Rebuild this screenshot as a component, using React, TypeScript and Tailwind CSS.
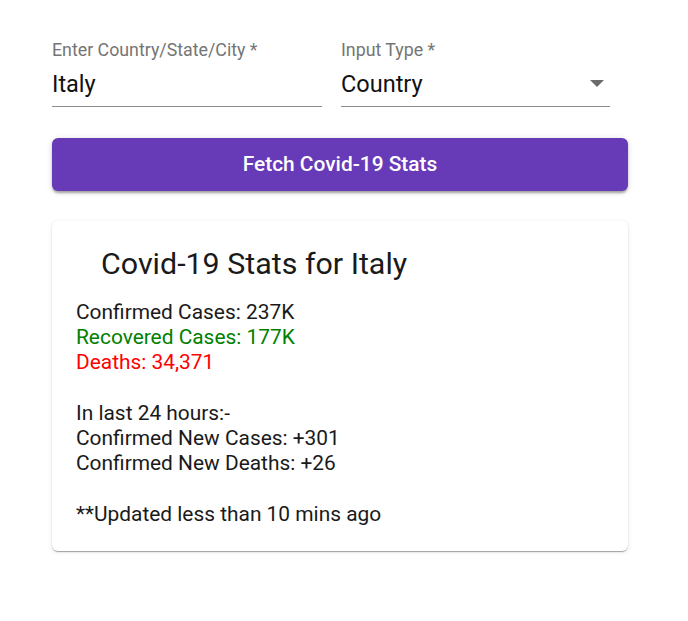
import { useState } from 'react';

const font = { fontFamily: 'Roboto, "Noto Sans", sans-serif' };

function Field({ label, value, select, width }: { label: string; value: string; select?: boolean; width: string }) {
  return (
    <div className={`${width} flex flex-col`}>
      <label className="text-[17.8px] leading-[20px] text-[#757575]">{label}</label>
      <div className="mt-[9px] flex items-center justify-between border-b-[1.5px] border-[#8c8c8c] pb-[7px]">
        <span className="text-[23.5px] leading-[30px] text-[#111]">{value}</span>
        {select && (
          <svg width="14" height="8" viewBox="0 0 14 8" className="mr-[6px]">
            <path d="M0 0 L14 0 L7 7 Z" fill="#6b6b6b" />
          </svg>
        )}
      </div>
    </div>
  );
}

export default function App() {
  const [country] = useState('Italy');

  return (
    <div className="min-h-screen bg-white" style={font}>
      <div className="ml-[52px] w-[576px] pt-[40px]">
        <div className="flex gap-[19px]">
          <Field label="Enter Country/State/City *" value={country} width="w-[270px]" />
          <Field label="Input Type *" value="Country" select width="w-[269px]" />
        </div>

        <button className="mt-[31px] flex h-[53px] w-full items-center justify-center rounded-[6px] bg-[#673ab7] text-[20.9px] font-medium text-white shadow-[0_3px_2px_-1px_rgba(0,0,0,0.2),0_2px_3px_0_rgba(0,0,0,0.14),0_1px_7px_0_rgba(0,0,0,0.12)]">
          Fetch Covid-19 Stats
        </button>

        <div className="mt-[30px] rounded-[6px] bg-white px-[24px] pb-[24px] pt-[24px] shadow-[0_2px_1px_-1px_rgba(0,0,0,0.2),0_1px_1px_0_rgba(0,0,0,0.14),0_1px_4px_0_rgba(0,0,0,0.12)]">
          <h2 className="pl-[25px] text-[30.4px] leading-[38px] text-[#1a1a1a]">Covid-19 Stats for {country}</h2>
          <div className="mt-[17px] text-[20.9px] leading-[25.2px] text-[#1a1a1a]">
            <p>Confirmed Cases: 237K</p>
            <p className="text-[#008000]">Recovered Cases: 177K</p>
            <p className="text-[#ff0000]">Deaths: 34,371</p>
            <p>&nbsp;</p>
            <p>In last 24 hours:-</p>
            <p>Confirmed New Cases: +301</p>
            <p>Confirmed New Deaths: +26</p>
            <p>&nbsp;</p>
            <p>**Updated less than 10 mins ago</p>
          </div>
        </div>
      </div>
    </div>
  );
}
